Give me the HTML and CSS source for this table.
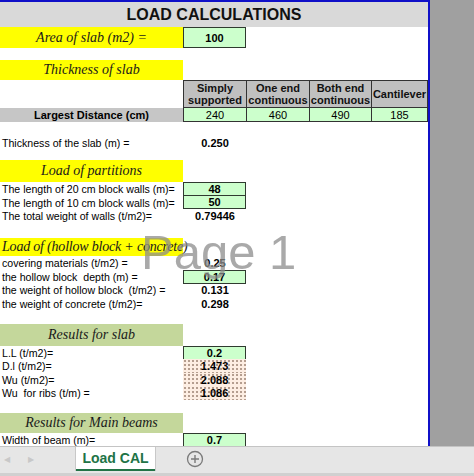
FILE: index.html
```html
<!DOCTYPE html>
<html>
<head>
<meta charset="utf-8">
<link rel="stylesheet" href="styles.css">
</head>
<body>
<div class="app">
  <div class="main">
    <div class="sheet">
      <div class="row r25 title"><span class="full">LOAD CALCULATIONS</span></div>
      <div class="row r21"><span class="lbl yellow script">Area of slab (m2) =</span><span class="val green">100</span></div>
      <div class="row r12"></div>
      <div class="row r20"><span class="lbl yellow script">Thickness of slab</span></div>
      <div class="row r28">
        <span></span>
        <span class="hd">Simply supported</span>
        <span class="hd">One end continuous</span>
        <span class="hd">Both end continuous</span>
        <span class="hd">Cantilever</span>
      </div>
      <div class="row r14">
        <span class="lbl grey bold">Largest Distance (cm)</span>
        <span class="tv">240</span><span class="tv">460</span><span class="tv">490</span><span class="tv">185</span>
      </div>
      <div class="row r13"></div>
      <div class="row r15"><span class="txt">Thickness of the slab (m) =</span><span class="num">0.250</span></div>
      <div class="row r10"></div>
      <div class="row r22"><span class="lbl yellow script">Load of partitions</span></div>
      <div class="row r14"><span class="txt">The length of 20 cm block walls (m)=</span><span class="val green">48</span></div>
      <div class="row r13"><span class="txt">The length of 10 cm block walls (m)=</span><span class="val green nt">50</span></div>
      <div class="row r13"><span class="txt">The total weight of walls (t/m2)=</span><span class="num">0.79446</span></div>
      <div class="row r16"></div>
      <div class="row r18"><span class="lbl yellow script wide">Load of (hollow block + concrete)</span></div>
      <div class="row r14"><span class="txt">covering materials (t/m2) =</span><span class="num">0.25</span></div>
      <div class="row r13"><span class="txt">the hollow block&nbsp; depth (m) =</span><span class="val green">0.17</span></div>
      <div class="row r14"><span class="txt">the weight of hollow block&nbsp; (t/m2) =</span><span class="num">0.131</span></div>
      <div class="row r13"><span class="txt">the weight of concrete (t/m2)=</span><span class="num">0.298</span></div>
      <div class="row r14"></div>
      <div class="row r22"><span class="lbl olive script">Results for slab</span></div>
      <div class="row r13"><span class="txt">L.L (t/m2)=</span><span class="val green">0.2</span></div>
      <div class="row r14"><span class="txt">D.l (t/m2)=</span><span class="num dots">1.473</span></div>
      <div class="row r13"><span class="txt">Wu (t/m2)=</span><span class="num dots">2.088</span></div>
      <div class="row r14"><span class="txt">Wu&nbsp; for ribs (t/m) =</span><span class="num dots">1.086</span></div>
      <div class="row r13"></div>
      <div class="row r20"><span class="lbl olive script">Results for Main beams</span></div>
      <div class="row r13"><span class="txt">Width of beam (m)=</span><span class="val green">0.7</span></div>
      <div class="watermark">Page 1</div>
    </div>
    <div class="side"></div>
  </div>
  <div class="tabbar">
    <div class="nav"><span class="arr">&#9664;</span><span class="arr">&#9654;</span></div>
    <div class="tab">Load CAL</div>
    <div class="add">
      <svg width="18" height="18" viewBox="0 0 18 18"><circle cx="9" cy="9" r="7.5" fill="none" stroke="#7a7a7a" stroke-width="1.3"/><path d="M9 5v8M5 9h8" stroke="#7a7a7a" stroke-width="1.4"/></svg>
    </div>
  </div>
</div>
</body>
</html>
```
FILE: styles.css
```css
* { box-sizing: border-box; }
html, body { margin: 0; padding: 0; }
body {
  width: 474px;
  height: 476px;
  overflow: hidden;
  font-family: "Liberation Sans", Arial, sans-serif;
  font-size: 11px;
  color: #000;
  background: #a0a0a0;
}
.app { display: flex; flex-direction: column; width: 474px; height: 476px; }
.main { display: flex; height: 446px; }
.sheet {
  position: relative;
  width: 430px;
  height: 446px;
  background: #fff;
  border-top: 2px solid #1010c8;
  border-right: 2px solid #1010c8;
  overflow: hidden;
}
.side { flex: 1; background: #a0a0a0; }
.row {
  display: grid;
  grid-template-columns: 183px 64px 63px 62px 56px;
  align-items: stretch;
}
.r10 { height: 10px; } .r12 { height: 12px; } .r13 { height: 13px; }
.r14 { height: 14px; } .r15 { height: 15px; } .r16 { height: 16px; }
.r18 { height: 18px; } .r20 { height: 20px; } .r21 { height: 21px; }
.r22 { height: 22px; } .r25 { height: 25px; } .r28 { height: 28px; }
.title { background: #d9d9d9; }
.full {
  grid-column: 1 / -1;
  display: flex; align-items: center; justify-content: center;
  font-weight: bold; font-size: 16px; color: #111;
}
.lbl { display: flex; align-items: center; justify-content: center; white-space: nowrap; }
.yellow { background: #ffff00; }
.olive { background: #c4d79b; }
.grey { background: #c6c6c6; }
.bold { font-weight: bold; }
.script {
  font-family: "Liberation Serif", "Times New Roman", serif;
  font-style: italic;
  font-size: 14px;
  color: #1a1a1a;
}
.wide { justify-content: flex-start; padding-left: 2px; letter-spacing: -0.2px; }
.val {
  display: flex; align-items: center; justify-content: center;
  font-weight: bold;
  border: 1px solid #2f3a2f;
  margin-right: 1px;
}
.nt { border-top: 0; }
.green { background: #ccffcc; }
.txt { display: flex; align-items: center; padding-left: 2px; white-space: nowrap; font-size: 10.6px; }
.num { display: flex; align-items: center; justify-content: center; font-weight: bold; }
.dots {
  background-color: #fdeee3;
  background-image: radial-gradient(circle, #a08878 0.6px, transparent 1.1px);
  background-size: 4px 4px;
  margin-right: 1px;
}
.hd {
  display: flex; align-items: center; justify-content: center; text-align: center;
  background: #c0c0c0;
  border: 1px solid #333;
  border-left: 0;
  font-weight: bold;
  line-height: 12px;
  color: #111;
  white-space: nowrap;
}
.hd:nth-child(2) { border-left: 1px solid #333; }
.hd:nth-child(2), .hd:nth-child(3), .hd:nth-child(4) { white-space: normal; }
.tv {
  display: flex; align-items: center; justify-content: center;
  background: #ccffcc;
  border: 1px solid #333; border-top: 0; border-left: 0;
}
.tv:nth-child(2) { border-left: 1px solid #333; }
.watermark {
  position: absolute;
  left: 141px; top: 226px;
  font-size: 49px;
  color: rgba(140,140,140,0.75);
  pointer-events: none;
  line-height: 1;
}
.tabbar {
  display: flex; align-items: flex-start;
  height: 30px;
  background: #e6e6e6;
  border-top: 1px solid #c4c4c4;
  border-bottom: 3px solid #d0d0d0;
}
.nav { width: 76px; display: flex; gap: 18px; padding-left: 4px; height: 24px; align-items: center; }
.arr { color: #c8c8c8; font-size: 8px; }
.tab {
  width: 79px; height: 24px;
  background: #fff;
  border-bottom: 2px solid #217346;
  color: #217346;
  font-weight: bold;
  font-size: 14px;
  display: flex; align-items: center; justify-content: center;
  box-shadow: 1px 0 0 #c8c8c8, -1px 0 0 #c8c8c8;
}
.add { margin-left: 31px; height: 24px; display: flex; align-items: center; }
```
